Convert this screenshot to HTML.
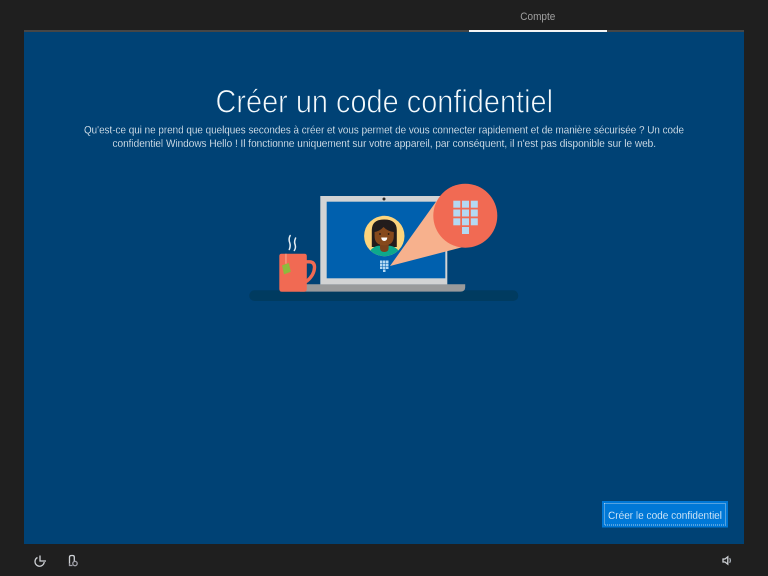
<!DOCTYPE html>
<html lang="fr">
<head>
<meta charset="utf-8">
<title>Créer un code confidentiel</title>
<style>
html,body{margin:0;padding:0;background:#1f1f1f;width:768px;height:576px;overflow:hidden}
svg{display:block}
text{font-family:"Liberation Sans",sans-serif}
</style>
</head>
<body>
<svg width="768" height="576" viewBox="0 0 768 576" xmlns="http://www.w3.org/2000/svg">
  <defs>
    <filter id="soft" x="-5%" y="-5%" width="110%" height="110%"><feGaussianBlur stdDeviation="0.35"/></filter>
    <clipPath id="av"><circle cx="384.3" cy="236" r="20.2"/></clipPath>
  </defs>
  <rect width="768" height="576" fill="#1f1f1f"/>
  <rect x="24" y="32" width="720" height="512" fill="#004275"/>
  <rect x="24" y="30" width="720" height="2" fill="#464646"/>
  <rect x="469" y="30" width="138" height="2" fill="#f4f4f4"/>
  <text x="520.3" y="20" font-size="11" fill="#a0a0a0" textLength="35" lengthAdjust="spacingAndGlyphs">Compte</text>

  <text x="215.5" y="112.7" font-size="32" fill="#f4f9fc" stroke="#004275" stroke-width="0.8" textLength="337.5" lengthAdjust="spacingAndGlyphs">Créer un code confidentiel</text>
  <text x="84" y="133.5" font-size="10.8" fill="#f6fafc" stroke="#004275" stroke-width="0.18" textLength="600" lengthAdjust="spacingAndGlyphs">Qu'est-ce qui ne prend que quelques secondes à créer et vous permet de vous connecter rapidement et de manière sécurisée ? Un code</text>
  <text x="112.5" y="147" font-size="10.8" fill="#f6fafc" stroke="#004275" stroke-width="0.18" textLength="543.5" lengthAdjust="spacingAndGlyphs">confidentiel Windows Hello ! Il fonctionne uniquement sur votre appareil, par conséquent, il n'est pas disponible sur le web.</text>

  <g filter="url(#soft)">
    <!-- shelf -->
    <rect x="249.3" y="290.3" width="269" height="10.7" rx="5.3" fill="#003a61"/>
    <!-- laptop base -->
    <path d="M300 284.3H465.2V287.5Q465 291.6 460.5 291.6H300Z" fill="#999a9b"/>
    <!-- laptop -->
    <rect x="320.3" y="196" width="127" height="88.4" fill="#d2d3d4"/>
    <rect x="326.7" y="201.7" width="118.6" height="76.6" fill="#0060ae"/>
    <circle cx="384" cy="199" r="1.5" fill="#2a2a2a"/>

    <!-- avatar -->
    <circle cx="384.3" cy="236" r="20.2" fill="#fdd47c"/>
    <g clip-path="url(#av)">
      <path d="M371.8 247V230Q372 219.5 384.3 219.5Q396.6 219.5 396.8 230V247Z" fill="#201a1e"/>
      <path d="M368 258Q369 247.5 378 245.7L390 245.7Q400 247.5 401 258Z" fill="#11a98c"/>
      <path d="M380 241H388.6V248Q388.6 252 384.3 252Q380 252 380 248Z" fill="#7a421f"/>
      <path d="M374.6 232Q380 231 383.5 227Q388 231.5 393.8 232V236Q393.8 245.3 384.3 245.3Q374.6 245.3 374.6 236Z" fill="#86491f"/>
      <path d="M381.2 237.5H387.3Q387 241 384.3 241Q381.5 241 381.2 237.5Z" fill="#fff"/>
      <circle cx="380" cy="234" r="0.9" fill="#1c1210"/>
      <circle cx="388.6" cy="234" r="0.9" fill="#1c1210"/>
    </g>

    <!-- small keypad -->
    <g fill="#b4d9f2">
      <rect x="380" y="260.5" width="2.5" height="2.5"/><rect x="383" y="260.5" width="2.5" height="2.5"/><rect x="386" y="260.5" width="2.5" height="2.5"/>
      <rect x="380" y="263.5" width="2.5" height="2.5"/><rect x="383" y="263.5" width="2.5" height="2.5"/><rect x="386" y="263.5" width="2.5" height="2.5"/>
      <rect x="380" y="266.5" width="2.5" height="2.5"/><rect x="383" y="266.5" width="2.5" height="2.5"/><rect x="386" y="266.5" width="2.5" height="2.5"/>
      <rect x="383" y="269.5" width="2.5" height="2.5"/>
    </g>

    <!-- callout -->
    <path d="M390 266L436.5 201L467 246Z" fill="#f7b18d"/>
    <circle cx="465.3" cy="215.7" r="32" fill="#f16b52"/>
    <g fill="#b4d9f2">
      <rect x="453.3" y="200.7" width="7" height="7"/><rect x="462" y="200.7" width="7" height="7"/><rect x="470.8" y="200.7" width="7" height="7"/>
      <rect x="453.3" y="209.5" width="7" height="7"/><rect x="462" y="209.5" width="7" height="7"/><rect x="470.8" y="209.5" width="7" height="7"/>
      <rect x="453.3" y="218.3" width="7" height="7"/><rect x="462" y="218.3" width="7" height="7"/><rect x="470.8" y="218.3" width="7" height="7"/>
      <rect x="462" y="227" width="7" height="7"/>
    </g>

    <!-- mug -->
    <path d="M305 261.8H309.5Q314.6 262 314.5 267.5Q314.2 275 307 281L304 282.5" fill="none" stroke="#f16b52" stroke-width="3.4"/>
    <path d="M281.5 253.7H304.5Q306.8 253.7 306.8 256V289Q306.8 291.8 304 291.8H282Q279.3 291.8 279.3 289V256Q279.3 253.7 281.5 253.7Z" fill="#f16b52"/>
    <rect x="285.5" y="253.7" width="0.9" height="10" fill="#f9b39a"/>
    <path d="M282 265.4L288.8 263L290.8 271.8L284 274.4Z" fill="#8dbb3d"/>
    <!-- steam -->
    <path d="M290.2 235.5Q288.2 239 289.8 243Q290.8 246 289.3 249.5" fill="none" stroke="#e4ecf2" stroke-width="1.5" stroke-linecap="round"/>
    <path d="M295.6 238Q293.8 242 295.2 245Q296 248 294.3 250.5" fill="none" stroke="#e4ecf2" stroke-width="1.5" stroke-linecap="round"/>
  </g>

  <!-- button -->
  <rect x="602" y="501" width="126" height="26.5" fill="#0078d7"/>
  <rect x="604.5" y="503.5" width="121" height="21.5" fill="none" stroke="#a9cdea" stroke-width="1" stroke-dasharray="1 1"/>
  <text x="608" y="519" font-size="10.8" fill="#f2f8fc" stroke="#0078d7" stroke-width="0.15" textLength="114" lengthAdjust="spacingAndGlyphs">Créer le code confidentiel</text>

  <!-- footer icons -->
  <g fill="none" stroke="#cfd2d6" stroke-width="1.3">
    <path d="M37.5 557.5A4.6 4.6 0 1 0 44.2 562"/>
    <path d="M40 555.5V561H46"/>
    <path d="M69.5 563.5V557Q69.5 555.5 71.5 555.5H72.5Q74.3 555.5 74.3 557V561"/>
    <path d="M69.5 563V565.5H72.5" stroke="#a0a0a8"/>
    <circle cx="75" cy="563.5" r="2.2" stroke="#a0a0a8"/>
    <path d="M723 559H725L727.8 556.8V564.2L725 562H723Z"/>
    <path d="M729.6 558.3Q731.2 560.5 729.6 562.7" stroke="#a8b0b8"/>
  </g>
</svg>
</body>
</html>
